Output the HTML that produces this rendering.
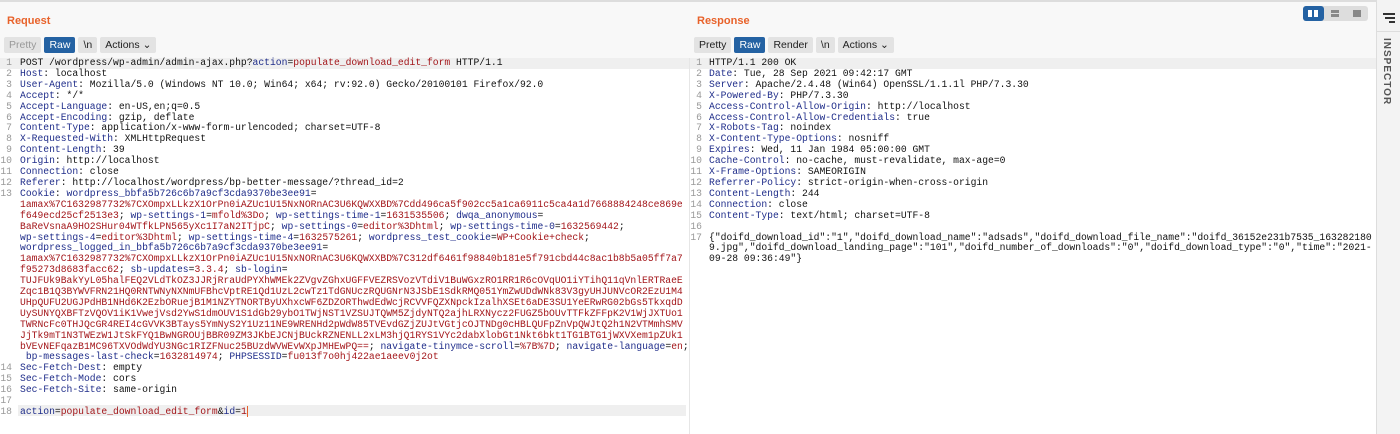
<!DOCTYPE html>
<html><head><meta charset="utf-8"><style>
*{margin:0;padding:0;box-sizing:border-box}
body{width:1400px;height:434px;overflow:hidden;background:#fff;font-family:"Liberation Sans",sans-serif;position:relative}
.top{position:absolute;left:0;top:0;width:1376px;height:58px;background:#f8f8f8;border-top:2px solid #ddd}
.title{position:absolute;top:15px;font-size:11px;font-weight:bold;color:#e8622a}
.btns{position:absolute;top:37px;height:16px;display:flex;gap:3px;font-size:10.5px}
.btns span{display:inline-block;height:16px;line-height:16px;padding:0 5px;background:#e3e3e3;color:#222;border-radius:2px}
.btns .g{color:#999}
.btns .b{background:#2462a3;color:#fff}
pre{position:absolute;top:58px;font-family:"Liberation Mono",monospace;font-size:9.7px;line-height:10.9px;color:#111;white-space:pre}
.gut{position:absolute;top:58px;font-family:"Liberation Mono",monospace;font-size:9.7px;line-height:10.9px;color:#999;text-align:right;white-space:pre;width:12px}
.n{color:#1f2d8a}.r{color:#a3161a}.k{color:#1f2d8a}
.hl{position:absolute;height:11px;background:#efefef}
.insp{position:absolute;left:1376px;top:0;width:24px;height:434px;background:#f3f3f3;border-left:1px solid #ddd}
</style></head><body>
<div class="top"></div>
<div class="hl" style="left:0;top:58px;width:1376px;height:11px"></div>
<div class="hl" style="left:18px;top:405px;width:668px"></div>
<div class="title" style="left:7px">Request</div>
<div class="title" style="left:697px">Response</div>
<div class="btns" style="left:4px"><span class="g">Pretty</span><span class="b">Raw</span><span>\n</span><span>Actions &#8964;</span></div>
<div class="btns" style="left:694px"><span>Pretty</span><span class="b">Raw</span><span>Render</span><span>\n</span><span>Actions &#8964;</span></div>
<div style="position:absolute;left:1303px;top:6px;width:65px;height:15px;background:#ddd;border-radius:3px"></div>
<div style="position:absolute;left:1303px;top:6px;width:21px;height:15px;background:#2462a3;border-radius:3px"></div>
<div style="position:absolute;left:1308px;top:10px;width:4px;height:7px;background:#fff"></div>
<div style="position:absolute;left:1314px;top:10px;width:4px;height:7px;background:#fff"></div>
<div style="position:absolute;left:1331px;top:10px;width:8px;height:3px;background:#888"></div>
<div style="position:absolute;left:1331px;top:14px;width:8px;height:3px;background:#888"></div>
<div style="position:absolute;left:1353px;top:10px;width:8px;height:7px;background:#888"></div>
<div style="position:absolute;left:689px;top:58px;width:1px;height:376px;background:#e6e6e6"></div>
<div class="insp">
<div style="position:absolute;left:6px;top:13px;width:12px;height:2px;background:#333"></div>
<div style="position:absolute;left:8px;top:17px;width:10px;height:2px;background:#333"></div>
<div style="position:absolute;left:12px;top:21px;width:6px;height:2px;background:#333"></div>
<div style="position:absolute;left:0;top:31px;width:24px;height:1px;background:#ddd"></div>
<div style="position:absolute;left:4px;top:38px;writing-mode:vertical-rl;font-size:10px;font-weight:bold;color:#555;letter-spacing:1px">INSPECTOR</div>
</div>
<div class="gut" style="left:0">1<br>2<br>3<br>4<br>5<br>6<br>7<br>8<br>9<br>10<br>11<br>12<br>13<br><br><br><br><br><br><br><br><br><br><br><br><br><br><br><br>14<br>15<br>16<br>17<br>18</div>
<pre style="left:20px">POST /wordpress/wp-admin/admin-ajax.php?<span class="k">action</span>=<span class="r">populate_download_edit_form</span> HTTP/1.1
<span class="n">Host</span>: localhost
<span class="n">User-Agent</span>: Mozilla/5.0 (Windows NT 10.0; Win64; x64; rv:92.0) Gecko/20100101 Firefox/92.0
<span class="n">Accept</span>: */*
<span class="n">Accept-Language</span>: en-US,en;q=0.5
<span class="n">Accept-Encoding</span>: gzip, deflate
<span class="n">Content-Type</span>: application/x-www-form-urlencoded; charset=UTF-8
<span class="n">X-Requested-With</span>: XMLHttpRequest
<span class="n">Content-Length</span>: 39
<span class="n">Origin</span>: http://localhost
<span class="n">Connection</span>: close
<span class="n">Referer</span>: http://localhost/wordpress/bp-better-message/?thread_id=2
<span class="n">Cookie</span>: <span class="k">wordpress_bbfa5b726c6b7a9cf3cda9370be3ee91</span>=
<span class="r">1amax%7C1632987732%7CXOmpxLLkzX1OrPn0iAZUc1U15NxNORnAC3U6KQWXXBD%7Cdd496ca5f902cc5a1ca6911c5ca4a1d7668884248ce869e</span>
<span class="r">f649ecd25cf2513e3</span>; <span class="k">wp-settings-1</span>=<span class="r">mfold%3Do</span>; <span class="k">wp-settings-time-1</span>=<span class="r">1631535506</span>; <span class="k">dwqa_anonymous</span>=
<span class="r">BaReVsnaA9HO2SHur04WTfkLPN565yXc1I7aN2ITjpC</span>; <span class="k">wp-settings-0</span>=<span class="r">editor%3Dhtml</span>; <span class="k">wp-settings-time-0</span>=<span class="r">1632569442</span>;
<span class="k">wp-settings-4</span>=<span class="r">editor%3Dhtml</span>; <span class="k">wp-settings-time-4</span>=<span class="r">1632575261</span>; <span class="k">wordpress_test_cookie</span>=<span class="r">WP+Cookie+check</span>;
<span class="k">wordpress_logged_in_bbfa5b726c6b7a9cf3cda9370be3ee91</span>=
<span class="r">1amax%7C1632987732%7CXOmpxLLkzX1OrPn0iAZUc1U15NxNORnAC3U6KQWXXBD%7C312df6461f98840b181e5f791cbd44c8ac1b8b5a05ff7a7</span>
<span class="r">f95273d8683facc62</span>; <span class="k">sb-updates</span>=<span class="r">3.3.4</span>; <span class="k">sb-login</span>=
<span class="r">TUJFUk9BakYyL05halFEQ2VLdTkOZ3JJRjRraUdPYXhWMEk2ZVgvZGhxUGFFVEZRSVozVTdiV1BuWGxzRO1RR1R6cOVqUO1iYTihQ11qVnlERTRaeE</span>
<span class="r">Zqc1B1Q3BYWVFRN21HQ0RNTWNyNXNmUFBhcVptRE1Qd1UzL2cwTz1TdGNUczRQUGNrN3JSbE1SdkRMQ051YmZwUDdWNk83V3gyUHJUNVcOR2EzU1M4</span>
<span class="r">UHpQUFU2UGJPdHB1NHd6K2EzbORuejB1M1NZYTNORTByUXhxcWF6ZDZORThwdEdWcjRCVVFQZXNpckIzalhXSEt6aDE3SU1YeERwRG02bGs5TkxqdD</span>
<span class="r">UySUNYQXBFTzVQOV1iK1VwejVsd2YwS1dmOUV1S1dGb29ybO1TWjNST1VZSUJTQWM5ZjdyNTQ2ajhLRXNycz2FUGZ5bOUvTTFkZFFpK2V1WjJXTUo1</span>
<span class="r">TWRNcFc0THJQcGR4REI4cGVVK3BTays5YmNyS2Y1Uz11NE9WRENHd2pWdW85TVEvdGZjZUJtVGtjcOJTNDg0cHBLQUFpZnVpQWJtQ2h1N2VTMmhSMV</span>
<span class="r">JjTk9mT1N3TWEzW1JtSkFYQ1BwNGROUjBBR09ZM3JKbEJCNjBUckRZNENLL2xLM3hjQ1RYS1VYc2dabXlobGt1Nkt6bkt1TG1BTG1jWXVXem1pZUk1</span>
<span class="r">bVEvNEFqazB1MC96TXVOdWdYU3NGc1RIZFNuc25BUzdWVWEvWXpJMHEwPQ==</span>; <span class="k">navigate-tinymce-scroll</span>=<span class="r">%7B%7D</span>; <span class="k">navigate-language</span>=<span class="r">en</span>;
 <span class="k">bp-messages-last-check</span>=<span class="r">1632814974</span>; <span class="k">PHPSESSID</span>=<span class="r">fu013f7o0hj422ae1aeev0j2ot</span>
<span class="n">Sec-Fetch-Dest</span>: empty
<span class="n">Sec-Fetch-Mode</span>: cors
<span class="n">Sec-Fetch-Site</span>: same-origin

<span class="k">action</span>=<span class="r">populate_download_edit_form</span>&amp;<span class="k">id</span>=<span class="r">1</span><span style="border-left:1px solid #e8622a"></span></pre>
<div class="gut" style="left:690px">1<br>2<br>3<br>4<br>5<br>6<br>7<br>8<br>9<br>10<br>11<br>12<br>13<br>14<br>15<br>16<br>17</div>
<pre style="left:709px">HTTP/1.1 200 OK
<span class="n">Date</span>: Tue, 28 Sep 2021 09:42:17 GMT
<span class="n">Server</span>: Apache/2.4.48 (Win64) OpenSSL/1.1.1l PHP/7.3.30
<span class="n">X-Powered-By</span>: PHP/7.3.30
<span class="n">Access-Control-Allow-Origin</span>: http://localhost
<span class="n">Access-Control-Allow-Credentials</span>: true
<span class="n">X-Robots-Tag</span>: noindex
<span class="n">X-Content-Type-Options</span>: nosniff
<span class="n">Expires</span>: Wed, 11 Jan 1984 05:00:00 GMT
<span class="n">Cache-Control</span>: no-cache, must-revalidate, max-age=0
<span class="n">X-Frame-Options</span>: SAMEORIGIN
<span class="n">Referrer-Policy</span>: strict-origin-when-cross-origin
<span class="n">Content-Length</span>: 244
<span class="n">Connection</span>: close
<span class="n">Content-Type</span>: text/html; charset=UTF-8

{"doifd_download_id":"1","doifd_download_name":"adsads","doifd_download_file_name":"doifd_36152e231b7535_163282180
9.jpg","doifd_download_landing_page":"101","doifd_number_of_downloads":"0","doifd_download_type":"0","time":"2021-
09-28 09:36:49"}</pre>
</body></html>
